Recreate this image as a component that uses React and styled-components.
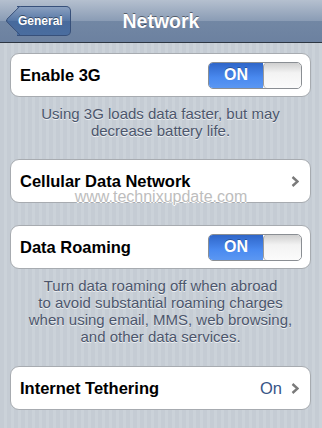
import React from 'react'
import styled, { createGlobalStyle } from 'styled-components'

const GlobalStyle = createGlobalStyle`
  html, body {
    margin: 0;
    padding: 0;
  }
  body {
    font-family: "Liberation Sans", Arial, sans-serif;
  }
`

const Screen = styled.div`
  width: 322px;
  height: 428px;
  overflow: hidden;
  background: repeating-linear-gradient(90deg, #c5ccd4 0 4px, #cbd2d9 4px 7px);
  position: relative;
`

const NavBar = styled.div`
  height: 42px;
  background: linear-gradient(#b5c0cf, #8a9cb5 50%, #7287a4 51%, #6c81a0);
  border-bottom: 1px solid #2d3642;
  display: flex;
  align-items: center;
  position: relative;
`

const BackButton = styled.div`
  margin-left: 17px;
  height: 28px;
  padding: 0 7px 0 1px;
  display: flex;
  align-items: center;
  color: #fff;
  font-weight: bold;
  font-size: 12px;
  text-shadow: 0 -1px 0 rgba(0, 0, 0, 0.45);
  background: linear-gradient(#8aa0c0, #5677a6 50%, #476a9c 51%, #4a6d9f);
  border: 1px solid #37507a;
  border-left: none;
  border-radius: 0 5px 5px 0;
  position: relative;

  &::before {
    content: '';
    position: absolute;
    left: -8px;
    top: 3px;
    width: 20px;
    height: 20px;
    transform: rotate(45deg);
    background: linear-gradient(135deg, #8aa0c0, #5677a6 50%, #476a9c 51%, #4a6d9f);
    border-left: 1px solid #37507a;
    border-bottom: 1px solid #37507a;
    border-radius: 0 0 0 4px;
    z-index: 0;
  }
  span {
    position: relative;
    z-index: 1;
  }
`

const Title = styled.div`
  position: absolute;
  left: 0;
  right: 0;
  text-align: center;
  color: #fff;
  font-weight: bold;
  font-size: 19.5px;
  text-shadow: 0 -1px 0 rgba(0, 0, 0, 0.45);
  pointer-events: none;
`

const Content = styled.div`
  padding: 10px 11px 0 10px;
`

const Card = styled.div`
  height: 42px;
  background: #fff;
  border: 1px solid #a7abb0;
  border-radius: 9px;
  display: flex;
  align-items: center;
  padding: 0 9px;
  margin-bottom: ${props => props.gap || 0}px;
`

const Label = styled.div`
  flex: 1;
  font-weight: bold;
  font-size: 16.5px;
  line-height: 18px;
  color: #000;
`

const Value = styled.div`
  font-size: 16.5px;
  color: #385487;
  margin-right: 9px;
`

const Chevron = styled.svg`
  width: 8px;
  height: 11px;
  margin-right: 2px;
`

const Toggle = styled.div`
  width: 94px;
  height: 27px;
  border-radius: 5px;
  border: 1px solid #8a8e93;
  box-sizing: border-box;
  display: flex;
  overflow: hidden;
  margin-right: -1px;
`

const ToggleOn = styled.div`
  width: 54px;
  background: linear-gradient(#2f66c9, #4a8af0 60%, #5b97f2);
  color: #fff;
  font-weight: bold;
  font-size: 16px;
  display: flex;
  align-items: center;
  justify-content: center;
  text-shadow: 0 -1px 0 rgba(0, 0, 0, 0.3);
`

const Knob = styled.div`
  flex: 1;
  background: linear-gradient(#cfcfcf, #f3f3f3 40%, #fbfbfb);
  border-left: 1px solid #9a9a9a;
  border-radius: 4px;
`

const Footer = styled.div`
  padding: 8px 4px 0;
  height: ${props => props.h}px;
  box-sizing: border-box;
  text-align: center;
  font-size: 15px;
  line-height: 17px;
  color: #4c566c;
  text-shadow: 0 1px 0 rgba(255, 255, 255, 0.7);
`

const Watermark = styled.div`
  position: absolute;
  left: 0;
  right: 0;
  top: 190px;
  text-align: center;
  font-size: 16px;
  line-height: 14px;
  color: #bdbdbd;
  text-shadow: 1px 0 0 #fff, -1px 0 0 #fff, 0 1px 0 #fff, 0 -1px 0 #fff;
  pointer-events: none;
`

const Arrow = () => (
  <Chevron viewBox="0 0 8 11">
    <path d="M1.5 1 L6.5 5.5 L1.5 10" fill="none" stroke="#7a7a7a" strokeWidth="2.4" />
  </Chevron>
)

const Switch = () => (
  <Toggle>
    <ToggleOn>ON</ToggleOn>
    <Knob />
  </Toggle>
)

const App = () => {
  return (
    <Screen>
      <GlobalStyle />
      <NavBar>
        <BackButton><span>General</span></BackButton>
        <Title>Network</Title>
      </NavBar>
      <Content>
        <Card>
          <Label>Enable 3G</Label>
          <Switch />
        </Card>
        <Footer h={62}>
          Using 3G loads data faster, but may<br />decrease battery life.
        </Footer>
        <Card gap={22}>
          <Label>Cellular Data Network</Label>
          <Arrow />
        </Card>
        <Card>
          <Label>Data Roaming</Label>
          <Switch />
        </Card>
        <Footer h={97}>
          Turn data roaming off when abroad<br />
          to avoid substantial roaming charges<br />
          when using email, MMS, web browsing,<br />
          and other data services.
        </Footer>
        <Card>
          <Label>Internet Tethering</Label>
          <Value>On</Value>
          <Arrow />
        </Card>
      </Content>
      <Watermark>www.technixupdate.com</Watermark>
    </Screen>
  )
}

export default App
